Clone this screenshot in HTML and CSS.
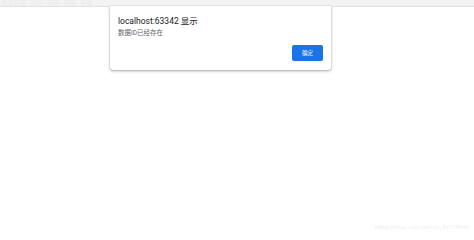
FILE: index.html
```html
<!DOCTYPE html>
<html>
<head>
<meta charset="utf-8">
<link rel="stylesheet" href="styles.css">
</head>
<body>
<div class="topbar"><span class="topbar-text">数据管理 · 添加 · 编辑 · 删除 · 查询</span></div>
<div class="page"></div>
<div class="watermark">https://blog.csdn.net/qq_44778940</div>
<div class="dialog">
  <div class="dialog-title">localhost:63342 显示</div>
  <div class="dialog-msg">数据ID已经存在</div>
  <div class="dialog-actions"><button class="btn-ok">确定</button></div>
</div>
</body>
</html>
```
FILE: styles.css
```css
html, body {
  margin: 0;
  padding: 0;
  width: 474px;
  height: 227px;
  background: #ffffff;
  overflow: hidden;
  font-family: Roboto, "Noto Sans CJK SC", sans-serif;
}
.topbar {
  height: 6px;
  background: #f3f3f3;
  border-bottom: 1px solid #e2e2e2;
  overflow: hidden;
  display: flex;
  align-items: flex-end;
}
.topbar-text {
  font-size: 6px;
  line-height: 6px;
  color: #ebebeb;
  padding-left: 2px;
}
.watermark {
  position: absolute;
  right: 5px;
  bottom: 10px;
  font-size: 6px;
  color: #efefef;
}
.dialog {
  position: absolute;
  left: 110px;
  top: 6px;
  width: 221px;
  height: 64px;
  box-sizing: border-box;
  background: #ffffff;
  border-radius: 0 0 3px 3px;
  box-shadow: 0 1px 3px rgba(0,0,0,0.35), 0 0 1px rgba(0,0,0,0.2);
  padding: 10px 8px 8px 8px;
  display: flex;
  flex-direction: column;
}
.dialog-title {
  font-size: 8.5px;
  line-height: 10px;
  color: #202124;
}
.dialog-msg {
  font-size: 6.5px;
  line-height: 8px;
  color: #5f6368;
  margin-top: 3px;
}
.dialog-actions {
  display: flex;
  justify-content: flex-end;
  margin-top: 8px;
}
.btn-ok {
  width: 31px;
  height: 16px;
  border: none;
  border-radius: 2px;
  background: #1a73e8;
  color: #ffffff;
  font-family: Roboto, "Noto Sans CJK SC", sans-serif;
  font-size: 5.5px;
  padding: 0;
}
```
